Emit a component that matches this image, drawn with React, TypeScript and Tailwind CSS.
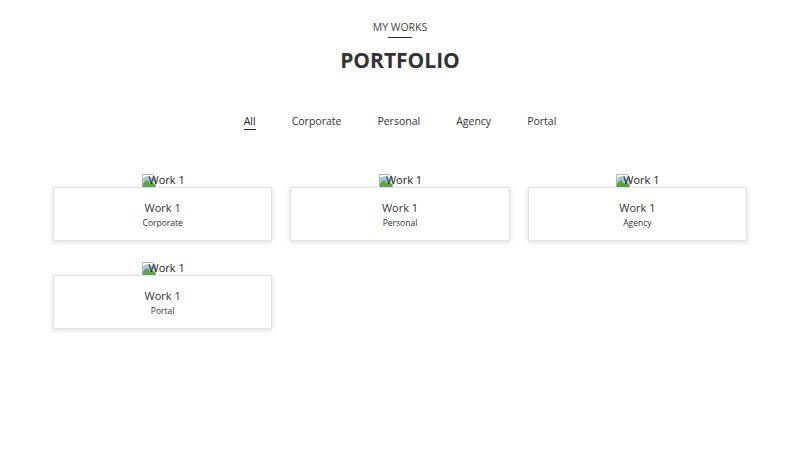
import { useState } from "react";

const filters = ["All", "Corporate", "Personal", "Agency", "Portal"];

const works = [
  { title: "Work 1", category: "Corporate" },
  { title: "Work 1", category: "Personal" },
  { title: "Work 1", category: "Agency" },
  { title: "Work 1", category: "Portal" }
];

function BrokenImage({ alt }: { alt: string }) {
  return (
    <span className="inline-flex items-end text-[11px] leading-[14px] text-[#222]">
      <svg width="16" height="16" viewBox="0 0 16 16" className="mb-[-2px]">
        <path d="M1.5 1.5h10l3 3v10h-13z" fill="#fff" stroke="#b5b5b5" />
        <path d="M2 5.5 L6 3 L14 6 V9 L2 9z" fill="#9fc7e6" />
        <path d="M2 14 L2 10 L6 7 L9 10 L11 9 L14 11 L14 14z" fill="#5aa845" />
      </svg>
      <span className="-ml-[8px]">{alt}</span>
    </span>
  );
}

export default function App() {
  const [active, setActive] = useState("All");

  return (
    <div
      className="min-h-[450px] w-full bg-white text-[#333]"
      style={{ fontFamily: '"Open Sans", "Noto Sans", sans-serif' }}
    >
      <div className="flex flex-col items-center pt-[20px]">
        <p className="text-[10.5px] leading-[14px] text-[#444]">MY WORKS</p>
        <div className="mt-[3px] h-px w-[24px] bg-[#333]" />
        <h2 className="mt-[8px] text-[21px] font-bold leading-[28px] text-[#333]">
          PORTFOLIO
        </h2>
      </div>

      <ul className="mt-[33px] flex justify-center gap-[36px]">
        {filters.map((f) => (
          <li key={f}>
            <button
              onClick={() => setActive(f)}
              className={
                f === active
                  ? "border-b border-[#222] pb-[1px] text-[10.5px] leading-[14px] text-[#222]"
                  : "pb-[2px] text-[10.5px] leading-[14px] text-[#333]"
              }
            >
              {f}
            </button>
          </li>
        ))}
      </ul>

      <div className="mx-auto mt-[42px] grid w-[694px] grid-cols-3 gap-x-[18px] gap-y-[20px]">
        {works.map((w) => (
          <div key={w.category} className="flex flex-col">
            <div className="flex h-[14px] justify-center">
              <BrokenImage alt={w.title} />
            </div>
            <div className="flex h-[54px] flex-col items-center justify-center border border-[#e3e3e3] bg-white shadow-[0_1px_5px_rgba(0,0,0,0.14)]">
              <h3 className="text-[11px] leading-[15px] text-[#333]">{w.title}</h3>
              <p className="mt-[2px] text-[8.5px] leading-[12px] text-[#333]">
                {w.category}
              </p>
            </div>
          </div>
        ))}
      </div>
    </div>
  );
}
